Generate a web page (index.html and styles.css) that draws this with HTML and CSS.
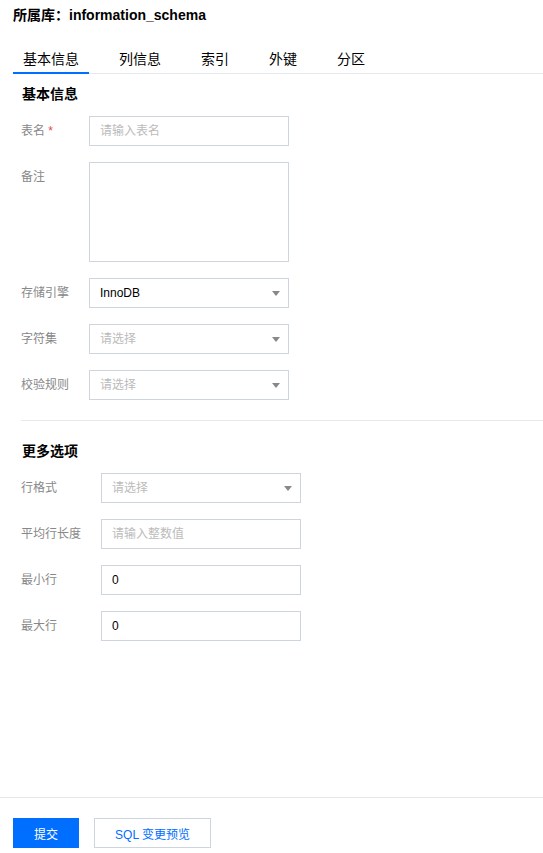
FILE: index.html
```html
<!DOCTYPE html>
<html lang="zh-CN">
<head>
<meta charset="utf-8">
<title>表设计</title>
<link rel="stylesheet" href="styles.css">
</head>
<body>
<div class="page">
  <div class="title">所属库：information_schema</div>
  <div class="tabs">
    <div class="tab active">基本信息</div>
    <div class="tab">列信息</div>
    <div class="tab">索引</div>
    <div class="tab">外键</div>
    <div class="tab">分区</div>
  </div>

  <div class="section">
    <div class="section-title">基本信息</div>
    <div class="form">
      <div class="row">
        <div class="label">表名 <span class="req">*</span></div>
        <div class="input placeholder">请输入表名</div>
      </div>
      <div class="row">
        <div class="label">备注</div>
        <div class="input textarea"></div>
      </div>
      <div class="row">
        <div class="label">存储引擎</div>
        <div class="input select">InnoDB<span class="arrow"></span></div>
      </div>
      <div class="row">
        <div class="label">字符集</div>
        <div class="input select placeholder">请选择<span class="arrow"></span></div>
      </div>
      <div class="row">
        <div class="label">校验规则</div>
        <div class="input select placeholder">请选择<span class="arrow"></span></div>
      </div>
    </div>
  </div>

  <div class="divider"></div>

  <div class="section more">
    <div class="section-title">更多选项</div>
    <div class="form wide">
      <div class="row">
        <div class="label">行格式</div>
        <div class="input select placeholder">请选择<span class="arrow"></span></div>
      </div>
      <div class="row">
        <div class="label">平均行长度</div>
        <div class="input placeholder">请输入整数值</div>
      </div>
      <div class="row">
        <div class="label">最小行</div>
        <div class="input">0</div>
      </div>
      <div class="row">
        <div class="label">最大行</div>
        <div class="input">0</div>
      </div>
    </div>
  </div>

  <div class="spacer"></div>

  <div class="footer">
    <button class="btn primary">提交</button>
    <button class="btn secondary">SQL 变更预览</button>
  </div>
</div>
</body>
</html>
```

FILE: styles.css
```css
* { box-sizing: border-box; }
html, body {
  margin: 0;
  padding: 0;
  background: #fff;
}
body {
  font-family: "Liberation Sans", "Noto Sans CJK SC", sans-serif;
  color: #000;
  font-size: 12px;
}
.page {
  display: flex;
  flex-direction: column;
  height: 853px;
}
.title {
  font-size: 14px;
  font-weight: bold;
  line-height: 20px;
  padding: 5px 0 0 13px;
  color: #000;
}
.tabs {
  display: flex;
  margin: 24px 0 0 13px;
  border-bottom: 1px solid #e5e8ed;
}
.tab {
  font-size: 14px;
  line-height: 20px;
  padding: 0 10px 3px;
  margin-right: 20px;
  color: #000;
  border-bottom: 2px solid transparent;
  margin-bottom: -1px;
}
.tab.active {
  border-bottom-color: #006eff;
}
.section {
  padding-left: 21px;
}
.section-title {
  font-size: 14px;
  font-weight: bold;
  line-height: 20px;
  margin-top: 10px;
  padding-left: 1px;
}
.form {
  display: flex;
  flex-direction: column;
  gap: 16px;
  margin-top: 12px;
}
.row {
  display: flex;
  align-items: flex-start;
}
.label {
  width: 68px;
  flex: none;
  color: #888;
  line-height: 30px;
  font-size: 12px;
}
.wide .label { width: 80px; }
.req {
  color: #e54545;
}
.input {
  position: relative;
  width: 200px;
  height: 30px;
  border: 1px solid #cfd5de;
  padding: 0 10px;
  line-height: 28px;
  font-size: 12px;
  color: #000;
}
.input.placeholder { color: #bbb; }
.input.textarea { height: 100px; }
.arrow {
  position: absolute;
  right: 8px;
  top: 12px;
  width: 0;
  height: 0;
  border-left: 4px solid transparent;
  border-right: 4px solid transparent;
  border-top: 5px solid #888;
}
.divider {
  margin: 20px 0 0 21px;
  border-top: 1px solid #e5e8ed;
}
.more .section-title {
  margin-top: 20px;
}
.more .form {
  margin-top: 12px;
}
.spacer { flex: 1; }
.footer {
  border-top: 1px solid #e5e8ed;
  padding: 20px 13px 5px;
  display: flex;
  gap: 15px;
}
.btn {
  height: 30px;
  font-family: inherit;
  font-size: 12px;
  padding: 0;
  border: 1px solid;
  cursor: pointer;
}
.btn.primary {
  width: 66px;
  background: #006eff;
  border-color: #006eff;
  color: #fff;
}
.btn.secondary {
  width: 117px;
  background: #fff;
  border-color: #cfd5de;
  color: #006eff;
}
```
